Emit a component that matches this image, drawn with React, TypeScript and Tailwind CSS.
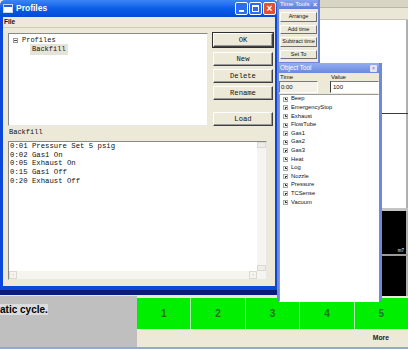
import React from 'react';

const mono = { fontFamily: '"Liberation Mono", "DejaVu Sans Mono", monospace' };
const sans = { fontFamily: '"Liberation Sans", Arial, sans-serif' };

const steps = ['0:01 Pressure Set 5 psig', '0:02 Gas1 On', '0:05 Exhaust On', '0:15 Gas1 Off', '0:20 Exhaust Off'];
const objects = ['Beep', 'EmergencyStop', 'Exhaust', 'FlowTube', 'Gas1', 'Gas2', 'Gas3', 'Heat', 'Log', 'Nozzle', 'Pressure', 'TCSense', 'Vacuum'];
const timeButtons = ['Arrange', 'Add time', 'Subtract time', 'Set To'];

const ClassicButton: React.FC<{ label: string; isDefault?: boolean; className?: string }> = ({ label, isDefault, className }) => (
    <div
        className={`flex h-[14px] w-[60px] items-center justify-center border border-t-white border-l-white border-b-[#404040] border-r-[#404040] bg-[#ECE9D8] text-[7.2px] text-[#111] shadow-[inset_-1px_-1px_0_#9a9a9a] ${isDefault ? 'outline outline-1 outline-[#303030]' : ''} ${className ?? ''}`}
        style={mono}
    >
        {label}
    </div>
);

const ProfilesWindow = () => (
    <div className="absolute left-0 top-0 flex h-[295px] w-[278px] flex-col">
        {/* title bar */}
        <div className="flex h-[17px] items-center rounded-t-[5px] bg-gradient-to-b from-[#3b86f4] via-[#0a5de8] to-[#0349d6] pl-[3px] pr-[2px]">
            <div className="flex h-[9px] w-[10px] flex-col border border-[#c8d8f8] bg-white">
                <div className="h-[2px] bg-[#2a5fd8]" />
            </div>
            <span className="ml-[3px] text-[8.5px] font-bold text-white" style={sans}>Profiles</span>
            <div className="ml-auto flex gap-[1px]">
                <div className="flex h-[13px] w-[13px] items-end justify-start rounded-[2px] border border-white bg-[#2b6cf0] pb-[2px] pl-[3px]">
                    <div className="h-[2px] w-[5px] bg-white" />
                </div>
                <div className="flex h-[13px] w-[13px] items-center justify-center rounded-[2px] border border-white bg-[#2b6cf0]">
                    <div className="h-[7px] w-[7px] border border-white border-t-2" />
                </div>
                <div className="flex h-[13px] w-[13px] items-center justify-center rounded-[2px] border border-white bg-[#e2512e] text-[10px] font-bold leading-none text-white" style={sans}>
                    ×
                </div>
            </div>
        </div>
        {/* body */}
        <div className="flex flex-1 flex-col border-x-[3px] border-[#0b47d8] bg-[#ECE9D8]">
            <div className="h-[11px] border-b border-b-[#d0ccbc] px-[1px] text-[6.5px] font-bold leading-[10px] text-[#111]" style={sans}>
                File
            </div>
            <div className="ml-[5px] mt-[5px] flex">
                <div className="h-[93px] w-[200px] border border-t-[#8a8a8a] border-l-[#8a8a8a] border-b-[#e8e8e8] border-r-[#e8e8e8] bg-white pt-[2px] text-[7px] text-[#111]" style={mono}>
                    <div className="flex h-[9px] items-center">
                        <div className="ml-[4px] flex h-[5px] w-[5px] items-center justify-center border border-[#9a9a9a]">
                            <div className="h-[1px] w-[3px] bg-[#555]" />
                        </div>
                        <span className="ml-[4px]">Profiles</span>
                    </div>
                    <div className="flex h-[9px] items-center">
                        <span className="ml-[21px] bg-[#e6e3d8] px-[2px]">Backfill</span>
                    </div>
                </div>
                <div className="ml-[5px] flex flex-col">
                    <ClassicButton label="OK" isDefault />
                    <ClassicButton label="New" className="mt-[5px]" />
                    <ClassicButton label="Delete" className="mt-[3px]" />
                    <ClassicButton label="Rename" className="mt-[3px]" />
                    <ClassicButton label="Load" className="mt-[12px]" />
                </div>
            </div>
            <div className="ml-[6px] mt-[2px] h-[9px] text-[7px] leading-[9px] text-[#111]" style={mono}>Backfill</div>
            <div className="ml-[5px] mt-[4px] flex h-[139px] w-[259px] flex-col border border-t-[#8a8a8a] border-l-[#8a8a8a] border-b-[#e8e8e8] border-r-[#e8e8e8] bg-white">
                <div className="flex flex-1">
                    <div className="flex-1 pl-[1px] text-[7.3px] leading-[8.7px] text-[#111]" style={mono}>
                        {steps.map((s) => (
                            <div key={s} className="whitespace-pre">{s}</div>
                        ))}
                    </div>
                    <div className="flex w-[9px] flex-col justify-between bg-[#f5f4ef]">
                        <div className="h-[6px] border border-[#dcdad0] bg-[#eeede6]" />
                        <div className="h-[6px] border border-[#dcdad0] bg-[#eeede6]" />
                    </div>
                </div>
                <div className="flex h-[8px] bg-[#f5f4ef]">
                    <div className="flex w-[8px] items-center justify-center border border-[#dcdad0] text-[5px] text-[#bbb]">‹</div>
                    <div className="flex-1" />
                    <div className="flex w-[8px] items-center justify-center border border-[#dcdad0] text-[5px] text-[#bbb]">›</div>
                    <div className="w-[9px]" />
                </div>
            </div>
        </div>
        <div className="h-[4px] bg-[#0b47d8]" />
        <div className="h-[5px] bg-[#0c1c78]" />
    </div>
);

const TimeToolsWindow = () => (
    <div className="absolute left-[277px] top-0 flex h-[64px] w-[43px] flex-col border-x-2 border-b-2 border-[#6d87d8] bg-[#ECE9D8]">
        <div className="flex h-[9px] items-center bg-gradient-to-b from-[#8aa4ea] to-[#5d7ed8] pl-[1px] pr-[1px]">
            <span className="whitespace-nowrap text-[6.2px] leading-none text-white" style={sans}>Time Tools</span>
            <span className="ml-auto text-[7px] font-bold leading-none text-white" style={sans}>×</span>
        </div>
        <div className="mt-[3px] flex flex-col items-center gap-[3px]">
            {timeButtons.map((b) => (
                <div
                    key={b}
                    className="flex h-[9.5px] w-[37px] items-center justify-center whitespace-nowrap border border-t-white border-l-white border-b-[#707070] border-r-[#707070] bg-[#ECE9D8] text-[5.5px] leading-none text-[#111]"
                    style={sans}
                >
                    {b}
                </div>
            ))}
        </div>
    </div>
);

const ObjectToolWindow = () => (
    <div className="absolute left-[277px] top-[63px] flex h-[239px] w-[105px] flex-col border-l-2 border-r-[3px] border-[#7088d8] bg-[#ECE9D8]">
        <div className="flex h-[10px] items-center bg-gradient-to-b from-[#95aef0] to-[#6a89de] pl-[1px] pr-[2px]">
            <span className="text-[6.3px] leading-none text-white" style={sans}>Object Tool</span>
            <div className="ml-auto flex h-[7px] w-[7px] items-center justify-center rounded-[1px] bg-[#e8e4f4] text-[5px] leading-none text-[#6070c0]" style={sans}>×</div>
        </div>
        <div className="flex text-[6px] leading-[8px] text-[#111]" style={sans}>
            <div className="ml-[1px] w-[51px]">Time</div>
            <div>Value</div>
        </div>
        <div className="flex h-[12px] text-[6px] leading-[10px] text-[#111]" style={sans}>
            <div className="w-[39px] border border-t-[#7a7a7a] border-l-[#7a7a7a] border-b-white border-r-white bg-[#f3f1e8] pl-[1px]">0:00</div>
            <div className="ml-[12px] w-[49px] border border-t-[#7a7a7a] border-l-[#3a3a3a] border-b-white border-r-white bg-white pl-[2px]">100</div>
        </div>
        <div className="mt-[1px] flex-1 border border-t-[#9a9a9a] border-l-[#9a9a9a] border-b-white border-r-white bg-white text-[5.8px] text-[#111]" style={sans}>
            {objects.map((o) => (
                <div key={o} className="flex h-[8.6px] items-center">
                    <div className="relative ml-[3px] h-[5px] w-[5px] border border-[#a8a8a8] bg-[#f4f4f4]">
                        <div className="absolute left-[0.5px] top-[1px] h-[1px] w-[2px] bg-[#333]" />
                        <div className="absolute left-[1px] top-[0.5px] h-[2px] w-[1px] bg-[#333]" />
                    </div>
                    <span className="ml-[3px] leading-none">{o}</span>
                </div>
            ))}
        </div>
    </div>
);

export default function App() {
    return (
        <div className="relative h-[349px] w-[408px] overflow-hidden bg-[#ECE9D8]" style={sans}>
            {/* background screen */}
            <div className="flex h-full flex-col">
                <div className="flex h-[296px]">
                    <div className="w-[320px] bg-[#ECE9D8]" />
                    <div className="flex flex-1 flex-col">
                        <div className="h-[8px] border-b border-[#bcb8a8] bg-[#d9d5c5]" />
                        <div className="h-[12px] border-b border-[#c8c4b4] bg-[#ebe7d7]" />
                        <div className="h-[93px] border-r-2 border-[#b0b0b0] bg-white" />
                        <div className="h-[1px] bg-[#3a3a3a]" />
                        <div className="h-[94px] border-r-2 border-[#b0b0b0] bg-white" />
                        <div className="h-[3px] bg-[#c4c4c4]" />
                        <div className="relative h-[43px] border-r-2 border-[#b0b0b0] bg-black">
                            <span className="absolute bottom-[1px] right-[2px] text-[4.5px] leading-none text-white">m7</span>
                        </div>
                        <div className="h-[2px] bg-[#9a9a9a]" />
                        <div className="flex h-[40px] flex-col border-r-2 border-[#b0b0b0] bg-black pl-[1px] pt-[13px]">
                            <div className="h-[1px] w-[2px] bg-white" />
                            <div className="mt-[3px] h-[1px] w-[2px] bg-white" />
                        </div>
                    </div>
                </div>
                <div className="flex h-[51px]">
                    <div className="w-[137px] bg-[#bfbfbf]">
                        <span className="bg-[#dcdcdc] text-[10px] font-bold leading-[11px] text-black">atic cycle.</span>
                    </div>
                    <div className="flex flex-1 flex-col bg-[#ECE9D8] pt-[2px]">
                        <div className="flex h-[31px] bg-[#00ee00]">
                            {['1', '2', '3', '4', '5'].map((n, i) => (
                                <div
                                    key={n}
                                    className={`flex flex-1 items-center justify-center text-[10px] font-bold text-[#23702a] ${i > 0 ? 'border-l border-[#b8f0b8]' : ''}`}
                                >
                                    {n}
                                </div>
                            ))}
                        </div>
                        <div className="flex flex-1 items-center justify-end pr-[19px] text-[6.8px] font-bold text-[#222]">More</div>
                    </div>
                </div>
                <div className="h-[2px] bg-[#98a8c8]" />
            </div>
            <ProfilesWindow />
            <TimeToolsWindow />
            <ObjectToolWindow />
        </div>
    );
}
